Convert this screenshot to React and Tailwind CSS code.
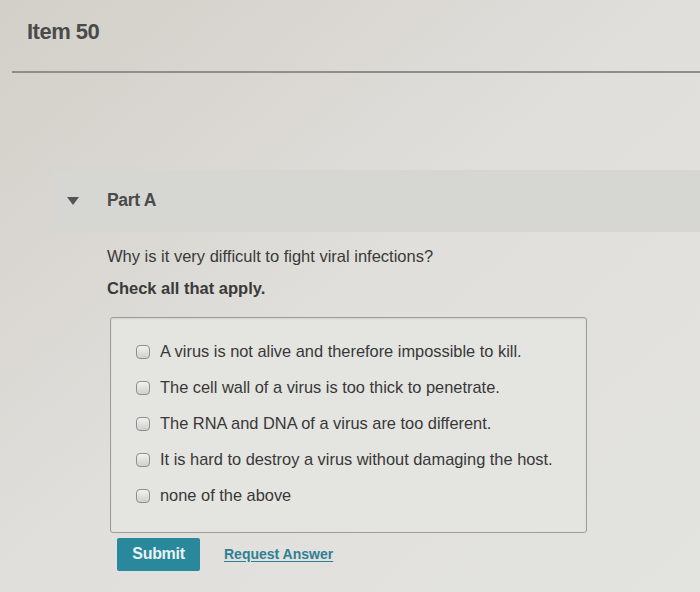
import React, { useState } from "react";

const options = [
  "A virus is not alive and therefore impossible to kill.",
  "The cell wall of a virus is too thick to penetrate.",
  "The RNA and DNA of a virus are too different.",
  "It is hard to destroy a virus without damaging the host.",
  "none of the above",
];

const App = () => {
  const [checked, setChecked] = useState([]);

  // toggle one answer
  const toggle = (i) => {
    setChecked((prev) =>
      prev.includes(i) ? prev.filter((x) => x !== i) : [...prev, i]
    );
  };

  return (
    <div
      className="w-[700px] h-[592px] overflow-hidden bg-gradient-to-br from-[#d3cfc9] via-[#e0dfdb] to-[#e3e3e0] text-[#3b3b3b]"
      style={{ fontFamily: '"Liberation Sans", Arial, sans-serif' }}
    >
      {/* Header */}
      <div className="pl-[27px] pt-[19px] h-[71px]">
        <h2 className="text-[22px] leading-[26px] font-bold text-[#4a4a4a] tracking-[-0.5px]">
          Item 50
        </h2>
      </div>
      <div className="ml-[12px] h-[1.5px] bg-[#8f8e8b]" />

      {/* Part A */}
      <div className="mt-[97px] ml-[55px] h-[62px] bg-[#d6d6d2] flex items-center">
        <svg width="12" height="8" viewBox="0 0 12 8" className="ml-[12px]">
          <path d="M0 0 L12 0 L6 8 Z" fill="#555" />
        </svg>
        <span className="ml-[28px] text-[17.5px] font-bold text-[#4a4a4a] tracking-[-0.3px]">
          Part A
        </span>
      </div>

      <div className="pl-[107px] pt-[14px]">
        <p className="text-[16.5px] leading-[20px] text-[#3a3a3a]">
          Why is it very difficult to fight viral infections?
        </p>
        <p className="mt-[12px] text-[16.5px] leading-[20px] font-bold text-[#3a3a3a]">
          Check all that apply.
        </p>

        {/* Answers */}
        <div className="mt-[19px] ml-[3px] w-[477px] h-[216px] border border-[#9d9c99] rounded-[3px] bg-[#e4e4e1] pt-[16px] pl-[25px] shadow-[inset_0_1px_2px_rgba(0,0,0,0.08)]">
          {options.map((opt, i) => (
            <label
              key={i}
              className="flex items-center h-[36px] cursor-pointer"
            >
              <input
                type="checkbox"
                checked={checked.includes(i)}
                onChange={() => toggle(i)}
                className="appearance-none w-[14px] h-[14px] rounded-[4px] border border-[#8e8e8c] bg-gradient-to-b from-[#f2f2f0] to-[#cfcfcc] checked:bg-[#2c8aa0]"
              />
              <span className="ml-[10px] text-[16.4px] text-[#383838]">{opt}</span>
            </label>
          ))}
        </div>

        {/* Actions */}
        <div className="flex items-center mt-[5px] ml-[10px]">
          <button className="w-[83px] h-[33px] bg-[#2a889c] text-[#e8f2f3] font-bold text-[16px] rounded-[2px] tracking-[-0.3px]">
            Submit
          </button>
          <a
            href="#"
            className="ml-[24px] text-[14px] font-bold text-[#2f7f96] underline underline-offset-2"
          >
            Request Answer
          </a>
        </div>
      </div>
    </div>
  );
};

export default App;
